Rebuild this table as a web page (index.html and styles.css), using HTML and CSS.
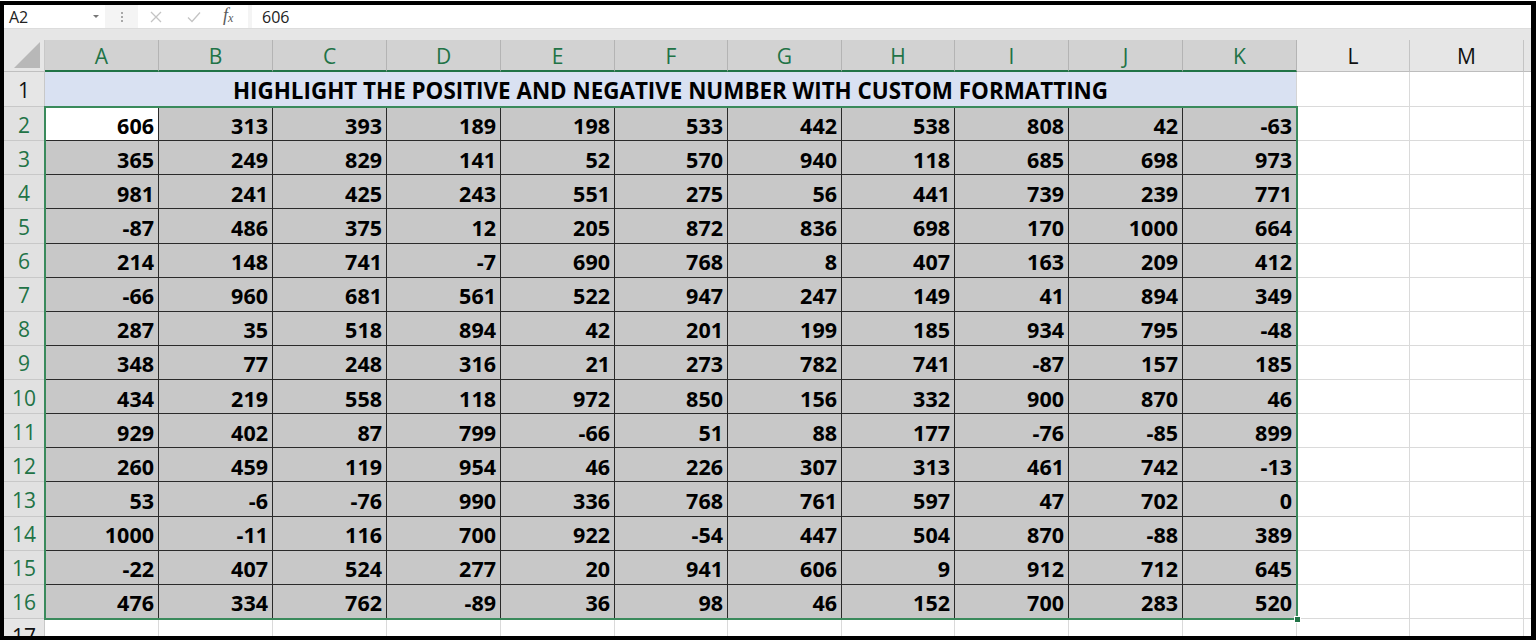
FILE: index.html
```html
<!DOCTYPE html>
<html>
<head>
<meta charset="utf-8">
<link rel="stylesheet" href="styles.css">
</head>
<body>
<div class="frame">
  <div class="fbar">
    <div class="namebox"><span class="nb-text">A2</span><span class="caret"></span></div>
    <div class="fgap"><span class="dots"><i></i><i></i><i></i></span></div>
    <div class="fbtns">
      <span class="fb-x">
        <svg width="14" height="14" viewBox="0 0 14 14"><path d="M2 2L12 12M12 2L2 12" stroke="#c4c4c4" stroke-width="1.3" fill="none"/></svg>
      </span>
      <span class="fb-ok">
        <svg width="16" height="14" viewBox="0 0 16 14"><path d="M2 7.5L6 11.5L14 2.5" stroke="#c4c4c4" stroke-width="1.3" fill="none"/></svg>
      </span>
      <span class="fb-fx">f<sub>x</sub></span>
    </div>
    <div class="fgap2"></div>
    <div class="finput">606</div>
  </div>

  <div class="sheet">
    <div class="band"></div>

    <div class="corner"><svg width="28" height="28" viewBox="0 0 28 28"><polygon points="27,1 27,27 1,27" fill="#b8b8b8"/></svg></div>
    <div class="ch sel">A</div><div class="ch sel">B</div><div class="ch sel">C</div><div class="ch sel">D</div><div class="ch sel">E</div><div class="ch sel">F</div><div class="ch sel">G</div><div class="ch sel">H</div><div class="ch sel">I</div><div class="ch sel">J</div><div class="ch sel">K</div><div class="ch">L</div><div class="ch">M</div><div class="ch fill"></div>

    <div class="rh">1</div>
    <div class="title">HIGHLIGHT THE POSITIVE AND NEGATIVE NUMBER WITH CUSTOM FORMATTING</div>
    <div class="e"></div><div class="e"></div><div class="f"></div>

    <div class="rh sel">2</div>
    <div class="c act">606</div><div class="c">313</div><div class="c">393</div><div class="c">189</div><div class="c">198</div><div class="c">533</div><div class="c">442</div><div class="c">538</div><div class="c">808</div><div class="c">42</div><div class="c">-63</div>
    <div class="e"></div><div class="e"></div><div class="f"></div>

    <div class="rh sel">3</div>
    <div class="c">365</div><div class="c">249</div><div class="c">829</div><div class="c">141</div><div class="c">52</div><div class="c">570</div><div class="c">940</div><div class="c">118</div><div class="c">685</div><div class="c">698</div><div class="c">973</div>
    <div class="e"></div><div class="e"></div><div class="f"></div>

    <div class="rh sel">4</div>
    <div class="c">981</div><div class="c">241</div><div class="c">425</div><div class="c">243</div><div class="c">551</div><div class="c">275</div><div class="c">56</div><div class="c">441</div><div class="c">739</div><div class="c">239</div><div class="c">771</div>
    <div class="e"></div><div class="e"></div><div class="f"></div>

    <div class="rh sel">5</div>
    <div class="c">-87</div><div class="c">486</div><div class="c">375</div><div class="c">12</div><div class="c">205</div><div class="c">872</div><div class="c">836</div><div class="c">698</div><div class="c">170</div><div class="c">1000</div><div class="c">664</div>
    <div class="e"></div><div class="e"></div><div class="f"></div>

    <div class="rh sel">6</div>
    <div class="c">214</div><div class="c">148</div><div class="c">741</div><div class="c">-7</div><div class="c">690</div><div class="c">768</div><div class="c">8</div><div class="c">407</div><div class="c">163</div><div class="c">209</div><div class="c">412</div>
    <div class="e"></div><div class="e"></div><div class="f"></div>

    <div class="rh sel">7</div>
    <div class="c">-66</div><div class="c">960</div><div class="c">681</div><div class="c">561</div><div class="c">522</div><div class="c">947</div><div class="c">247</div><div class="c">149</div><div class="c">41</div><div class="c">894</div><div class="c">349</div>
    <div class="e"></div><div class="e"></div><div class="f"></div>

    <div class="rh sel">8</div>
    <div class="c">287</div><div class="c">35</div><div class="c">518</div><div class="c">894</div><div class="c">42</div><div class="c">201</div><div class="c">199</div><div class="c">185</div><div class="c">934</div><div class="c">795</div><div class="c">-48</div>
    <div class="e"></div><div class="e"></div><div class="f"></div>

    <div class="rh sel">9</div>
    <div class="c">348</div><div class="c">77</div><div class="c">248</div><div class="c">316</div><div class="c">21</div><div class="c">273</div><div class="c">782</div><div class="c">741</div><div class="c">-87</div><div class="c">157</div><div class="c">185</div>
    <div class="e"></div><div class="e"></div><div class="f"></div>

    <div class="rh sel">10</div>
    <div class="c">434</div><div class="c">219</div><div class="c">558</div><div class="c">118</div><div class="c">972</div><div class="c">850</div><div class="c">156</div><div class="c">332</div><div class="c">900</div><div class="c">870</div><div class="c">46</div>
    <div class="e"></div><div class="e"></div><div class="f"></div>

    <div class="rh sel">11</div>
    <div class="c">929</div><div class="c">402</div><div class="c">87</div><div class="c">799</div><div class="c">-66</div><div class="c">51</div><div class="c">88</div><div class="c">177</div><div class="c">-76</div><div class="c">-85</div><div class="c">899</div>
    <div class="e"></div><div class="e"></div><div class="f"></div>

    <div class="rh sel">12</div>
    <div class="c">260</div><div class="c">459</div><div class="c">119</div><div class="c">954</div><div class="c">46</div><div class="c">226</div><div class="c">307</div><div class="c">313</div><div class="c">461</div><div class="c">742</div><div class="c">-13</div>
    <div class="e"></div><div class="e"></div><div class="f"></div>

    <div class="rh sel">13</div>
    <div class="c">53</div><div class="c">-6</div><div class="c">-76</div><div class="c">990</div><div class="c">336</div><div class="c">768</div><div class="c">761</div><div class="c">597</div><div class="c">47</div><div class="c">702</div><div class="c">0</div>
    <div class="e"></div><div class="e"></div><div class="f"></div>

    <div class="rh sel">14</div>
    <div class="c">1000</div><div class="c">-11</div><div class="c">116</div><div class="c">700</div><div class="c">922</div><div class="c">-54</div><div class="c">447</div><div class="c">504</div><div class="c">870</div><div class="c">-88</div><div class="c">389</div>
    <div class="e"></div><div class="e"></div><div class="f"></div>

    <div class="rh sel">15</div>
    <div class="c">-22</div><div class="c">407</div><div class="c">524</div><div class="c">277</div><div class="c">20</div><div class="c">941</div><div class="c">606</div><div class="c">9</div><div class="c">912</div><div class="c">712</div><div class="c">645</div>
    <div class="e"></div><div class="e"></div><div class="f"></div>

    <div class="rh sel">16</div>
    <div class="c">476</div><div class="c">334</div><div class="c">762</div><div class="c">-89</div><div class="c">36</div><div class="c">98</div><div class="c">46</div><div class="c">152</div><div class="c">700</div><div class="c">283</div><div class="c">520</div>
    <div class="e"></div><div class="e"></div><div class="f"></div>

    <div class="rh">17</div>
    <div class="e"></div><div class="e"></div><div class="e"></div><div class="e"></div><div class="e"></div><div class="e"></div><div class="e"></div><div class="e"></div><div class="e"></div><div class="e"></div><div class="e"></div><div class="e"></div><div class="e"></div><div class="f"></div>

    <div class="selection"><span class="handle"></span></div>
  </div>
</div>
</body>
</html>
```

FILE: styles.css
```css
* { box-sizing: border-box; }

body {
  margin: 0;
  background: #ffffff;
  font-family: "Open Sans", "Liberation Sans", sans-serif;
}

.frame {
  margin-top: 1px;
  height: 639px;
  border: 4px solid #000;
  border-right-width: 5px;
  overflow: hidden;
  background: #fff;
  display: flex;
  flex-direction: column;
}

/* formula bar */
.fbar {
  height: 24px;
  flex: none;
  display: flex;
  background: #f4f4f4;
  border-bottom: 1px solid #dcdcdc;
}
.namebox {
  width: 101px;
  background: #fff;
  position: relative;
  display: flex;
  align-items: center;
  padding-left: 5px;
  font-size: 16px;
  color: #222;
}
.caret {
  position: absolute;
  right: 6px;
  top: 10px;
  width: 0;
  height: 0;
  border-left: 3px solid transparent;
  border-right: 3px solid transparent;
  border-top: 3px solid #777;
}
.fgap {
  width: 33px;
  display: flex;
  align-items: center;
  justify-content: center;
}
.dots {
  display: flex;
  flex-direction: column;
  gap: 2px;
}
.dots i {
  display: block;
  width: 2px;
  height: 2px;
  background: #a8a8a8;
}
.fbtns {
  width: 110px;
  background: #fff;
  display: flex;
  align-items: center;
  position: relative;
}
.fb-x { position: absolute; left: 11px; top: 5px; display: flex; }
.fb-ok { position: absolute; left: 48px; top: 5px; display: flex; }
.fb-fx {
  position: absolute;
  left: 85px;
  top: 0px;
  font-family: "Liberation Serif", serif;
  font-style: italic;
  font-size: 18px;
  color: #5a5a5a;
}
.fb-fx sub { font-size: 12px; vertical-align: -1px; }
.fgap2 { width: 4px; }
.finput {
  flex: 1;
  background: #fff;
  display: flex;
  align-items: center;
  padding-left: 10px;
  font-size: 16px;
  color: #222;
}

/* sheet */
.sheet {
  position: relative;
  flex: none;
  display: grid;
  grid-template-columns: 41px 114px 114px 114px 114px 114px 113px 114px 113px 114px 114px 114px 113px 114px 1fr;
  grid-template-rows: 11px 32px 35px repeat(15, 34.13px) 34px;
}
.band {
  grid-column: 1 / -1;
  background: #e6e6e6;
}
.corner {
  background: #e6e6e6;
  border-right: 1px solid #c8c8c8;
  border-bottom: 1px solid #c0c0c0;
  display: flex;
  align-items: flex-end;
  justify-content: flex-end;
  padding: 0 3px 2px 0;
}
.ch {
  background: #e6e6e6;
  border-right: 1px solid #c4c4c4;
  border-bottom: 1px solid #bdbdbd;
  display: flex;
  align-items: center;
  justify-content: center;
  font-size: 21px;
  color: #111;
  padding-top: 1px;
}
.ch.sel {
  background: #d2d2d2;
  color: #217346;
  border-right-color: #b4b4b4;
  border-bottom: 2px solid #217346;
}
.ch.fill { border-right: none; }

.rh {
  background: #e6e6e6;
  border-bottom: 1px solid #c8c8c8;
  border-right: 1px solid #c8c8c8;
  display: flex;
  align-items: center;
  justify-content: center;
  font-size: 21px;
  color: #111;
  padding-top: 2px;
}
.rh.sel {
  background: #e1e1e1;
  color: #217346;
}

.title {
  grid-column: 2 / 13;
  background: #d9e1f2;
  border-right: 1px solid #d4d4d4;
  border-bottom: 1px solid #b9c2d3;
  display: flex;
  align-items: center;
  justify-content: center;
  font-weight: 700;
  font-size: 22.4px;
  color: #000;
  padding-top: 2px;
}

.c {
  background: #c8c8c8;
  border-right: 1px solid #2a2a2a;
  border-bottom: 1px solid #2a2a2a;
  display: flex;
  align-items: center;
  justify-content: flex-end;
  padding: 3px 4px 0 0;
  font-weight: 700;
  font-size: 21.5px;
  color: #000;
}
.c.act { background: #fff; }

.e {
  background: #fff;
  border-right: 1px solid #dadada;
  border-bottom: 1px solid #dadada;
}
.f {
  background: #fff;
  border-bottom: 1px solid #dadada;
}

.selection {
  position: absolute;
  left: 40px;
  top: 77px;
  width: 1254px;
  height: 514px;
  border: 2px solid #3a8a5c;
  pointer-events: none;
}
.handle {
  position: absolute;
  right: -5px;
  bottom: -5px;
  width: 7px;
  height: 7px;
  background: #217346;
  border: 1px solid #fff;
}
```
